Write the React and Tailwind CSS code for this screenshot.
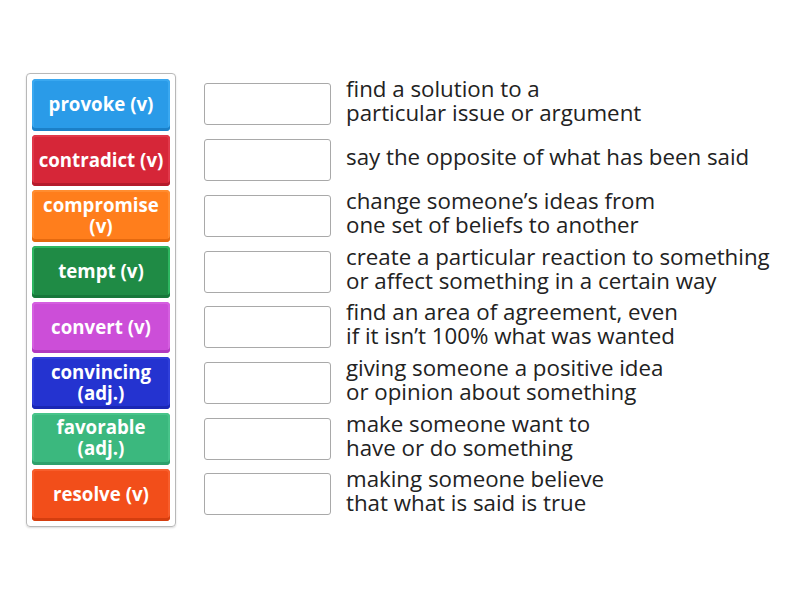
import React from "react";

const tiles = [
  { label: ["provoke (v)"], cls: "bg-[#2a9be8] shadow-[inset_0_-3px_0_#1b80c8,inset_0_0_0_2px_#3aa8f0]" },
  { label: ["contradict (v)"], cls: "bg-[#d62638] shadow-[inset_0_-3px_0_#b51b2c,inset_0_0_0_2px_#e0384a]" },
  { label: ["compromise", "(v)"], cls: "bg-[#ff7e1c] shadow-[inset_0_-3px_0_#e4690f,inset_0_0_0_2px_#ff8d30]" },
  { label: ["tempt (v)"], cls: "bg-[#1f8b45] shadow-[inset_0_-3px_0_#17773a,inset_0_0_0_2px_#2db660]" },
  { label: ["convert (v)"], cls: "bg-[#cc4ed8] shadow-[inset_0_-3px_0_#b23ac0,inset_0_0_0_2px_#d55fe0]" },
  { label: ["convincing", "(adj.)"], cls: "bg-[#2433d0] shadow-[inset_0_-3px_0_#1a27b4,inset_0_0_0_2px_#2f3fda]" },
  { label: ["favorable", "(adj.)"], cls: "bg-[#3bb87e] shadow-[inset_0_-3px_0_#2ea06b,inset_0_0_0_2px_#48c48a]" },
  { label: ["resolve (v)"], cls: "bg-[#f24e1a] shadow-[inset_0_-3px_0_#d43e0f,inset_0_0_0_2px_#f75e2c]" },
];

const defs = [
  ["find a solution to a", "particular issue or argument"],
  ["say the opposite of what has been said"],
  ["change someone\u2019s ideas from", "one set of beliefs to another"],
  ["create a particular reaction to something", "or affect something in a certain way"],
  ["find an area of agreement, even", "if it isn\u2019t 100% what was wanted"],
  ["giving someone a positive idea", "or opinion about something"],
  ["make someone want to", "have or do something"],
  ["making someone believe", "that what is said is true"],
];

export default function App() {
  return (
    <div
      className="w-[800px] h-[600px] bg-white overflow-hidden"
      style={{ fontFamily: '"Open Sans", "Noto Sans", sans-serif' }}
    >
      <div className="flex pt-[73px] pl-[26px]">
        <div className="w-[150px] border border-[#b8b8b8] rounded-[4px] px-[5px] py-[5px] flex flex-col gap-[4px] shadow-[0_1px_2px_rgba(0,0,0,0.15)]">
          {tiles.map((t, i) => (
            <div
              key={i}
              className={`h-[51.7px] rounded-[4px] pb-[3px] flex flex-col items-center justify-center text-white font-bold text-[18.7px] leading-[21px] ${t.cls}`}
            >
              {t.label.map((l, j) => (
                <span key={j}>{l}</span>
              ))}
            </div>
          ))}
        </div>
        <div className="ml-[28px] pt-[3.6px] flex flex-col">
          {defs.map((d, i) => (
            <div key={i} className="h-[55.7px] flex items-center">
              <div className="w-[127px] h-[42px] border border-[#a9a9a9] rounded-[3px] bg-white shrink-0" />
              <div className="ml-[15px] -mt-[6px] text-[22.3px] leading-[24px] text-[#222] whitespace-nowrap">
                {d.map((l, j) => (
                  <div key={j}>{l}</div>
                ))}
              </div>
            </div>
          ))}
        </div>
      </div>
    </div>
  );
}
